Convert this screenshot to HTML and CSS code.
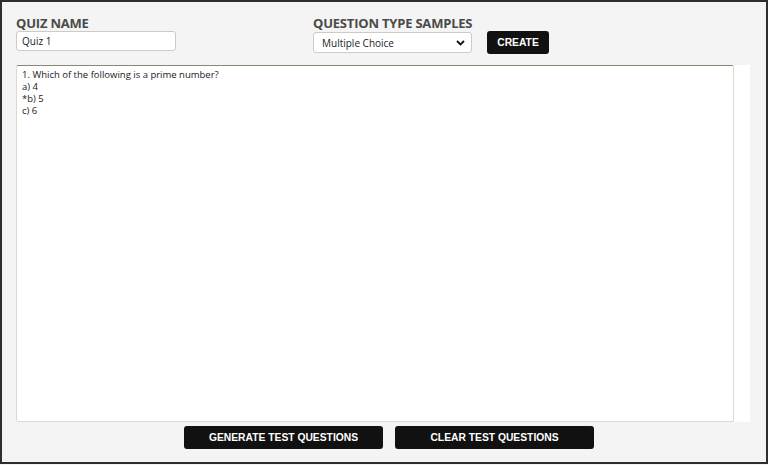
FILE: index.html
```html
<!DOCTYPE html>
<html>
<head>
<meta charset="utf-8">
<link rel="stylesheet" href="styles.css">
</head>
<body>
<div class="frame">
  <div class="top">
    <div class="field name-field">
      <label class="label">QUIZ NAME</label>
      <input class="text-input" type="text" value="Quiz 1">
    </div>
    <div class="field type-field">
      <label class="label">QUESTION TYPE SAMPLES</label>
      <div class="type-row">
        <div class="select">
          <span>Multiple Choice</span>
          <svg class="chev" width="9" height="6" viewBox="0 0 9 6"><path d="M1 1 L4.5 4.5 L8 1" fill="none" stroke="#111" stroke-width="1.8"/></svg>
        </div>
        <button class="btn create">CREATE</button>
      </div>
    </div>
  </div>
  <div class="editor-wrap">
    <div class="editor">1. Which of the following is a prime number?
a) 4
*b) 5
c) 6</div>
  </div>
  <div class="actions">
    <button class="btn wide">GENERATE TEST QUESTIONS</button>
    <button class="btn wide">CLEAR TEST QUESTIONS</button>
  </div>
</div>
</body>
</html>
```
FILE: styles.css
```css
html, body {
  margin: 0;
  padding: 0;
  background: #f4f4f4;
}
.frame {
  box-sizing: border-box;
  width: 768px;
  height: 464px;
  border: 2px solid #2e2e2e;
  background: #f4f4f4;
  padding: 13px 14px 0 14px;
  font-family: "Open Sans", "Lato", sans-serif;
  color: #222;
}
.top {
  display: flex;
  height: 50px;
}
.field {
  display: flex;
  flex-direction: column;
}
.name-field {
  width: 297px;
}
.label {
  font-weight: 700;
  font-size: 13px;
  line-height: 16px;
  color: #4a4a4a;
  letter-spacing: -0.2px;
}
.text-input {
  box-sizing: border-box;
  width: 160px;
  height: 20px;
  margin-top: 0;
  border: 1px solid #cfcbc0;
  border-radius: 3px;
  background: #fff;
  padding: 0 5px;
  font-family: "Open Sans", sans-serif;
  font-size: 10px;
  color: #222;
  outline: none;
}
.type-row {
  display: flex;
  align-items: center;
  gap: 15px;
  margin-top: 0;
}
.select {
  box-sizing: border-box;
  width: 159px;
  height: 21px;
  border: 1px solid #cfcbc0;
  border-radius: 3px;
  background: #fff;
  display: flex;
  align-items: center;
  justify-content: space-between;
  padding: 0 6px 0 8px;
  font-size: 10px;
  color: #222;
}
.chev {
  display: block;
}
.btn {
  border: none;
  background: #111;
  color: #fff;
  font-family: "Liberation Sans", Arial, sans-serif;
  font-weight: 700;
  font-size: 10.3px;
  border-radius: 3px;
  padding: 0;
  cursor: pointer;
}
.create {
  width: 62px;
  height: 23px;
}
.editor-wrap {
  width: 734px;
  height: 357px;
  background: #fff;
}
.editor {
  box-sizing: border-box;
  width: 718px;
  height: 357px;
  border: 1px solid #dcd9d0;
  border-top-color: #8c8878;
  border-radius: 2px;
  background: #fff;
  padding: 3px 5px;
  white-space: pre;
  font-family: "Open Sans", sans-serif;
  font-size: 9.5px;
  line-height: 12px;
  color: #1a1a1a;
}
.actions {
  display: flex;
  justify-content: center;
  gap: 12px;
  padding-left: 10px;
  margin-top: 4px;
}
.wide {
  width: 199px;
  height: 23px;
}
```
